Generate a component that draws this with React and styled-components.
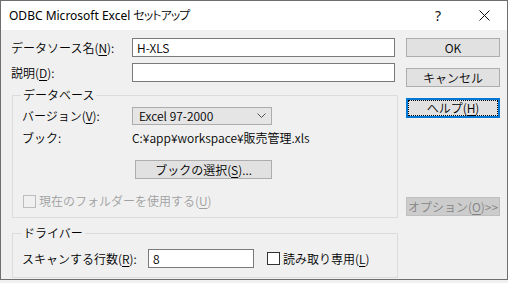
import React from "react";
import styled, { createGlobalStyle } from "styled-components";

const Global = createGlobalStyle`
  html, body { margin: 0; padding: 0; background: #f0f0f0; }
  body {
    font-family: "Noto Sans CJK JP", "Noto Sans", sans-serif;
    font-size: 12px;
    font-weight: 350;
    color: #000;
  }
  * { box-sizing: border-box; }
`;

const Window = styled.div`
  width: 508px;
  height: 280px;
  border: 1px solid #6e6e6e;
  background: #f0f0f0;
  display: flex;
  flex-direction: column;
`;

const TitleBar = styled.div`
  height: 29px;
  flex-shrink: 0;
  background: #fff;
  display: flex;
  align-items: center;
  padding-left: 8px;
`;

const Title = styled.div`
  flex: 1;
  line-height: 16px;
  white-space: nowrap;
  font-family: "Noto Sans", "Noto Sans CJK JP", sans-serif;
  font-weight: 400;
`;

const TitleKana = styled.span`
  font-family: "Noto Sans CJK JP", sans-serif;
  font-weight: 350;
  font-feature-settings: "palt";
  letter-spacing: -1px;
`;

const TitleButton = styled.div`
  width: 46px;
  height: 29px;
  display: flex;
  align-items: center;
  justify-content: center;
  font-family: "Noto Sans", sans-serif;
  font-size: 14px;
  font-weight: 400;
  color: #111;
`;

const Body = styled.div`
  display: grid;
  grid-template-columns: 386px 94px;
  column-gap: 9px;
  padding: 8px 0 0 10px;
`;

const LeftCol = styled.div`
  display: flex;
  flex-direction: column;
`;

const RightCol = styled.div`
  display: flex;
  flex-direction: column;
`;

const Row = styled.div`
  display: flex;
  align-items: center;
  height: ${(p) => p.$h || 19}px;
  margin-top: ${(p) => p.$mt || 0}px;
  margin-left: ${(p) => p.$ml || 0}px;
`;

const Label = styled.span`
  width: ${(p) => p.$w}px;
  flex-shrink: 0;
  line-height: 16px;
  white-space: nowrap;
  color: ${(p) => (p.$disabled ? "#a0a0a0" : "#000")};
`;

const Text = styled.span`
  line-height: 16px;
  white-space: nowrap;
  color: ${(p) => (p.$disabled ? "#a0a0a0" : "#000")};
`;

const Key = styled.u`
  text-decoration: underline;
  text-underline-offset: 2px;
`;

const TextBox = styled.div`
  width: ${(p) => p.$w}px;
  height: 19px;
  background: #fff;
  border: 1px solid #7a7a7a;
  padding: 0 4px;
  display: flex;
  align-items: center;
  line-height: 16px;
`;

const Select = styled.div`
  width: 140px;
  height: 18px;
  background: #e5e5e5;
  border: 1px solid #adadad;
  padding: 0 5px 0 6px;
  display: flex;
  align-items: center;
  justify-content: space-between;
  line-height: 16px;
`;

const Button = styled.div`
  width: ${(p) => p.$w || 94}px;
  height: ${(p) => p.$h || 19}px;
  margin-top: ${(p) => p.$mt || 0}px;
  margin-left: ${(p) => p.$ml || 0}px;
  background: ${(p) => (p.$disabled ? "#cccccc" : "#e1e1e1")};
  border: ${(p) =>
    p.$focus ? "2px solid #0078d7" : p.$disabled ? "1px solid #bfbfbf" : "1px solid #adadad"};
  outline: ${(p) => (p.$focus ? "1px dotted #000" : "none")};
  outline-offset: -3px;
  color: ${(p) => (p.$disabled ? "#838383" : "#000")};
  display: flex;
  align-items: center;
  justify-content: center;
  line-height: 16px;
  white-space: nowrap;
  flex-shrink: 0;
`;

const Group = styled.fieldset`
  margin: ${(p) => p.$mt}px 0 0 1px;
  padding: 0;
  width: 386px;
  min-width: 0;
  border: 1px solid #dcdcdc;
`;

const Legend = styled.legend`
  margin-left: 8px;
  padding: 0 2px;
  line-height: 16px;
  font-size: 12px;
`;

const GroupBody = styled.div`
  display: flex;
  flex-direction: column;
  padding: ${(p) => p.$pt}px 0 ${(p) => p.$pb}px 9px;
`;

const Check = styled.span`
  width: 13px;
  height: 13px;
  flex-shrink: 0;
  border: 1px solid ${(p) => (p.$disabled ? "#bcbcbc" : "#333")};
  background: ${(p) => (p.$disabled ? "#f0f0f0" : "#fff")};
  margin-left: ${(p) => p.$ml || 0}px;
  margin-right: ${(p) => p.$mr || 3}px;
`;

const Chevron = () => (
  <svg width="9" height="6" viewBox="0 0 9 6">
    <polyline points="0.5,0.5 4.5,4.5 8.5,0.5" fill="none" stroke="#555" strokeWidth="1" />
  </svg>
);

export default function App() {
  return (
    <>
      <Global />
      <Window>
        <TitleBar>
          <Title>
            ODBC Microsoft Excel <TitleKana>セットアップ</TitleKana>
          </Title>
          <TitleButton>?</TitleButton>
          <TitleButton>
            <svg width="11" height="11" viewBox="0 0 11 11">
              <path d="M0.5 0.5 L10.5 10.5 M10.5 0.5 L0.5 10.5" stroke="#111" strokeWidth="1" />
            </svg>
          </TitleButton>
        </TitleBar>
        <Body>
          <LeftCol>
            <Row>
              <Label $w={121}>データソース名(<Key>N</Key>):</Label>
              <TextBox $w={263}>H-XLS</TextBox>
            </Row>
            <Row $mt={6}>
              <Label $w={121}>説明(<Key>D</Key>):</Label>
              <TextBox $w={263} />
            </Row>
            <Group $mt={5}>
              <Legend>データベース</Legend>
              <GroupBody $pt={4} $pb={8}>
                <Row $h={18}>
                  <Label $w={110}>バージョン(<Key>V</Key>):</Label>
                  <Select>
                    <span>Excel 97-2000</span>
                    <Chevron />
                  </Select>
                </Row>
                <Row $h={16} $mt={5}>
                  <Label $w={110}>ブック:</Label>
                  <Text>C:¥app¥workspace¥販売管理.xls</Text>
                </Row>
                <Button $w={137} $ml={113} $mt={14}>
                  ブックの選択(<Key>S</Key>)...
                </Button>
                <Row $h={16} $mt={14}>
                  <Check $disabled $ml={1} $mr={3} />
                  <Text $disabled>
                    現在のフォルダーを使用する(<Key>U</Key>)
                  </Text>
                </Row>
              </GroupBody>
            </Group>
            <Group $mt={7}>
              <Legend>ドライバー</Legend>
              <GroupBody $pt={8} $pb={9}>
                <Row>
                  <Label $w={126}>スキャンする行数(<Key>R</Key>):</Label>
                  <TextBox $w={106}>8</TextBox>
                  <Check $ml={13} $mr={3} />
                  <Text>
                    読み取り専用(<Key>L</Key>)
                  </Text>
                </Row>
              </GroupBody>
            </Group>
          </LeftCol>
          <RightCol>
            <Button>OK</Button>
            <Button $mt={11}>キャンセル</Button>
            <Button $mt={11} $h={20} $focus>
              ヘルプ(<Key>H</Key>)
            </Button>
            <Button $mt={79} $disabled>
              オプション(<Key>O</Key>)&gt;&gt;
            </Button>
          </RightCol>
        </Body>
      </Window>
    </>
  );
}
